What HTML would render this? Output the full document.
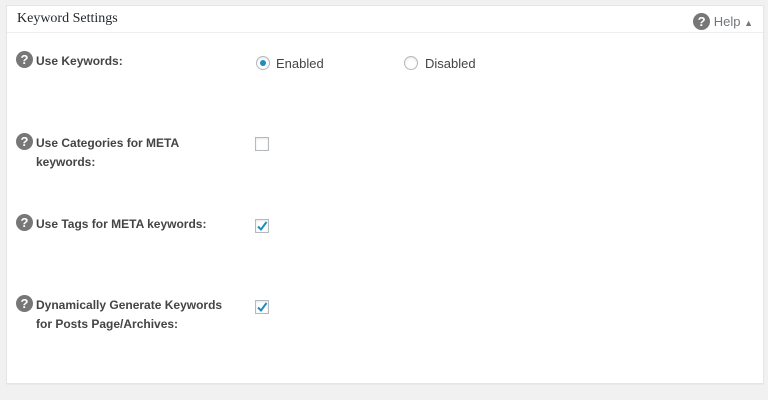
<!DOCTYPE html>
<html><head><style>
body{margin:0;background:#f1f1f1;width:768px;height:400px;font-family:"Liberation Sans",sans-serif;position:relative;overflow:hidden}
.panel{position:absolute;left:6px;top:5px;width:756px;height:377px;background:#fff;border:1px solid #e5e5e5;box-shadow:0 1px 1px rgba(0,0,0,.04)}
.hdr{position:absolute;left:0;top:0;right:0;height:26px;border-bottom:1px solid #eee}
.title{position:absolute;left:10px;top:5px;font-family:"Liberation Serif",serif;font-size:14px;color:#23282d}
.help{position:absolute;right:10px;top:8px;font-size:13px;color:#72777c}
.q{display:inline-block;width:17px;height:17px;border-radius:50%;background:#777;color:#fff;font-weight:bold;font-size:13px;line-height:17px;text-align:center;vertical-align:middle}
.lbl{position:absolute;left:9px;font-size:12px;font-weight:bold;color:#444;line-height:19px}
.lbl .q{position:absolute;left:0;top:-1px}
.lbl span.t{display:block;margin-left:20px}
.radio{position:absolute;width:12px;height:12px;border:1px solid #b4b9be;border-radius:50%;box-shadow:inset 0 1px 2px rgba(0,0,0,.1)}
.radio.on::after{content:"";position:absolute;left:3px;top:3px;width:6px;height:6px;border-radius:50%;background:#1e8cbe}
.rt{position:absolute;font-size:13px;color:#444}
.cb{position:absolute;width:12px;height:12px;border:1px solid #b4b9be;box-shadow:inset 0 1px 2px rgba(0,0,0,.1)}
.cb svg{position:absolute;left:0;top:0}
</style></head><body>
<div class="panel">
<div class="hdr"><div class="title">Keyword Settings</div>
<div class="help"><span class="q" style="position:relative;top:-1px">?</span> Help <span style="font-size:9px">&#9650;</span></div></div>

<div class="lbl" style="top:46px"><span class="q">?</span><span class="t">Use Keywords:</span></div>
<div class="radio on" style="left:249px;top:50px"></div><div class="rt" style="left:269px;top:50px">Enabled</div>
<div class="radio" style="left:397px;top:50px"></div><div class="rt" style="left:418px;top:50px">Disabled</div>

<div class="lbl" style="top:128px"><span class="q">?</span><span class="t">Use Categories for META<br>keywords:</span></div>
<div class="cb" style="left:248px;top:131px"></div>

<div class="lbl" style="top:209px"><span class="q">?</span><span class="t">Use Tags for META keywords:</span></div>
<div class="cb" style="left:248px;top:213px"><svg width="12" height="12" viewBox="0 0 12 12"><path d="M2 6.5L5 9.5L10.5 2" stroke="#1e8cbe" stroke-width="2" fill="none"/></svg></div>

<div class="lbl" style="top:290px"><span class="q">?</span><span class="t">Dynamically Generate Keywords<br>for Posts Page/Archives:</span></div>
<div class="cb" style="left:248px;top:294px"><svg width="12" height="12" viewBox="0 0 12 12"><path d="M2 6.5L5 9.5L10.5 2" stroke="#1e8cbe" stroke-width="2" fill="none"/></svg></div>
</div>
</body></html>
